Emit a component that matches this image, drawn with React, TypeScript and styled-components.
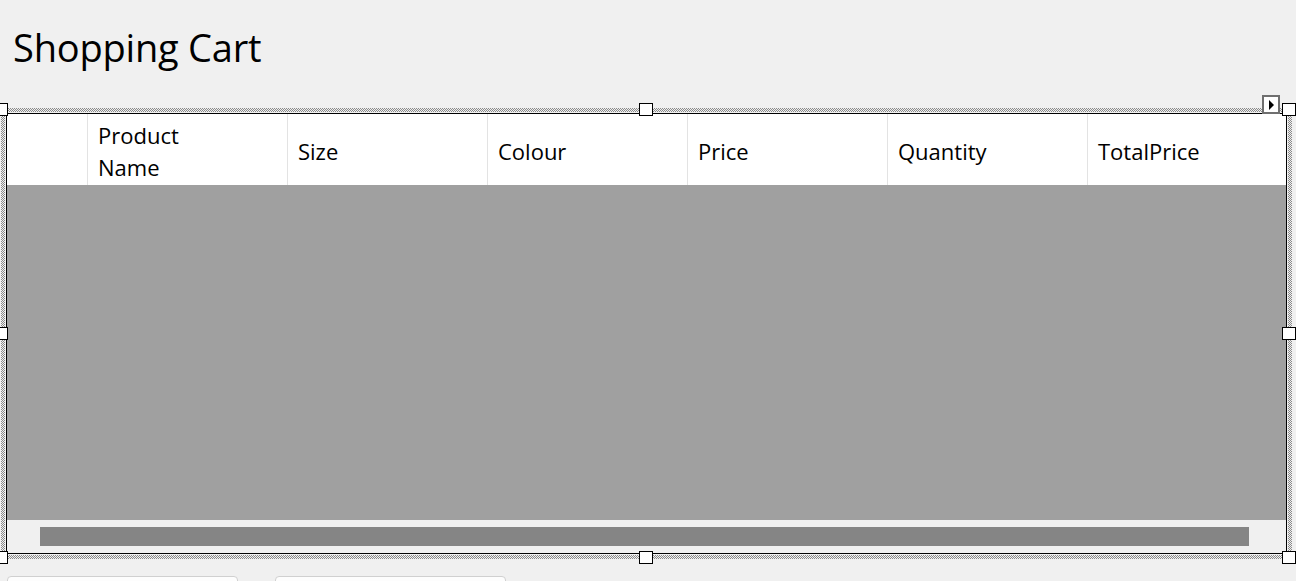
import styled, { createGlobalStyle } from 'styled-components';

const GlobalStyle = createGlobalStyle`
  html, body {
    margin: 0;
    padding: 0;
    background: #f0f0f0;
  }
  body {
    font-family: 'Open Sans', 'Noto Sans', sans-serif;
    color: #000;
  }
`;

const Page = styled.div`
  width: 1296px;
  height: 581px;
  overflow: hidden;
  background: #f0f0f0;
  display: flex;
  flex-direction: column;
  & > * {
    flex-shrink: 0;
  }
`;

const Title = styled.h1`
  margin: 0;
  padding: 22px 0 0 13px;
  height: 86px;
  box-sizing: border-box;
  font-size: 38px;
  font-weight: 400;
  line-height: 50px;
  letter-spacing: -0.2px;
`;

/* designer selection frame (hatched) */
const Frame = styled.div`
  position: relative;
  margin: 22px 0 0 1px;
  width: 1291px;
  height: 451px;
  box-sizing: border-box;
  padding: 4px;
  background: repeating-conic-gradient(#8a8a8a 0 25%, #f0f0f0 0 50%) 0 0 / 2px 2px;
`;

const Grid = styled.div`
  height: 100%;
  box-sizing: border-box;
  border: 1px solid #f0f0f0;
  background: #f0f0f0;
  display: flex;
  flex-direction: column;
`;

const GridInner = styled.div`
  flex: 1;
  border: 1px solid #000;
  display: flex;
  flex-direction: column;
  overflow: hidden;
`;

const HeaderRow = styled.div`
  display: flex;
  height: 71px;
  background: #fff;
  flex-shrink: 0;
`;

const HeaderCell = styled.div<{ $w: number }>`
  width: ${({ $w }) => $w}px;
  flex-shrink: 0;
  box-sizing: border-box;
  border-right: 1px solid #e3e3e3;
  padding: 2px 10px 0 10px;
  display: flex;
  align-items: center;
  font-size: 22px;
  line-height: 32px;
  white-space: pre-line;
`;

const Workspace = styled.div`
  flex: 1;
  background: #a0a0a0;
`;

const ScrollArea = styled.div`
  height: 33px;
  flex-shrink: 0;
  background: #f0f0f0;
  display: flex;
  align-items: center;
  padding: 0 37px 0 33px;
`;

const Thumb = styled.div`
  flex: 1;
  height: 19px;
  margin-top: -1px;
  background: #858585;
`;

const Handle = styled.div<{ $x: number; $y: number }>`
  position: absolute;
  left: ${({ $x }) => $x}px;
  top: ${({ $y }) => $y}px;
  width: 12px;
  height: 11px;
  background: #fff;
  border: 1px solid #000;
`;

const SmartTag = styled.div`
  position: absolute;
  left: 1261px;
  top: -13px;
  width: 14px;
  height: 15px;
  border: 2px solid #6f6f6f;
  background: #fff;
  display: flex;
  align-items: center;
  justify-content: center;
`;

const Arrow = styled.div`
  width: 0;
  height: 0;
  margin-left: 1px;
  border-top: 5px solid transparent;
  border-bottom: 5px solid transparent;
  border-left: 5px solid #000;
`;

const ButtonRow = styled.div`
  display: flex;
  gap: 37px;
  padding: 17px 0 0 7px;
`;

const Button = styled.div`
  width: 231px;
  height: 30px;
  box-sizing: border-box;
  border: 1px solid #d0d0d0;
  border-radius: 4px;
  background: #fdfdfd;
`;

const columns = [
  { w: 81, label: '' },
  { w: 200, label: 'Product\nName' },
  { w: 200, label: 'Size' },
  { w: 200, label: 'Colour' },
  { w: 200, label: 'Price' },
  { w: 200, label: 'Quantity' },
  { w: 200, label: 'TotalPrice' },
];

export default function App() {
  return (
    <Page>
      <GlobalStyle />
      <Title>Shopping Cart</Title>
      <Frame>
        <Grid>
          <GridInner>
            <HeaderRow>
              {columns.map((c, i) => (
                <HeaderCell key={i} $w={c.w}>
                  {c.label}
                </HeaderCell>
              ))}
            </HeaderRow>
            <Workspace />
            <ScrollArea>
              <Thumb />
            </ScrollArea>
          </GridInner>
        </Grid>
        <Handle $x={-7} $y={-5} />
        <Handle $x={638} $y={-5} />
        <Handle $x={1281} $y={-5} />
        <Handle $x={-7} $y={219} />
        <Handle $x={1281} $y={219} />
        <Handle $x={-7} $y={443} />
        <Handle $x={638} $y={443} />
        <Handle $x={1281} $y={443} />
        <SmartTag>
          <Arrow />
        </SmartTag>
      </Frame>
      <ButtonRow>
        <Button />
        <Button />
      </ButtonRow>
    </Page>
  );
}
